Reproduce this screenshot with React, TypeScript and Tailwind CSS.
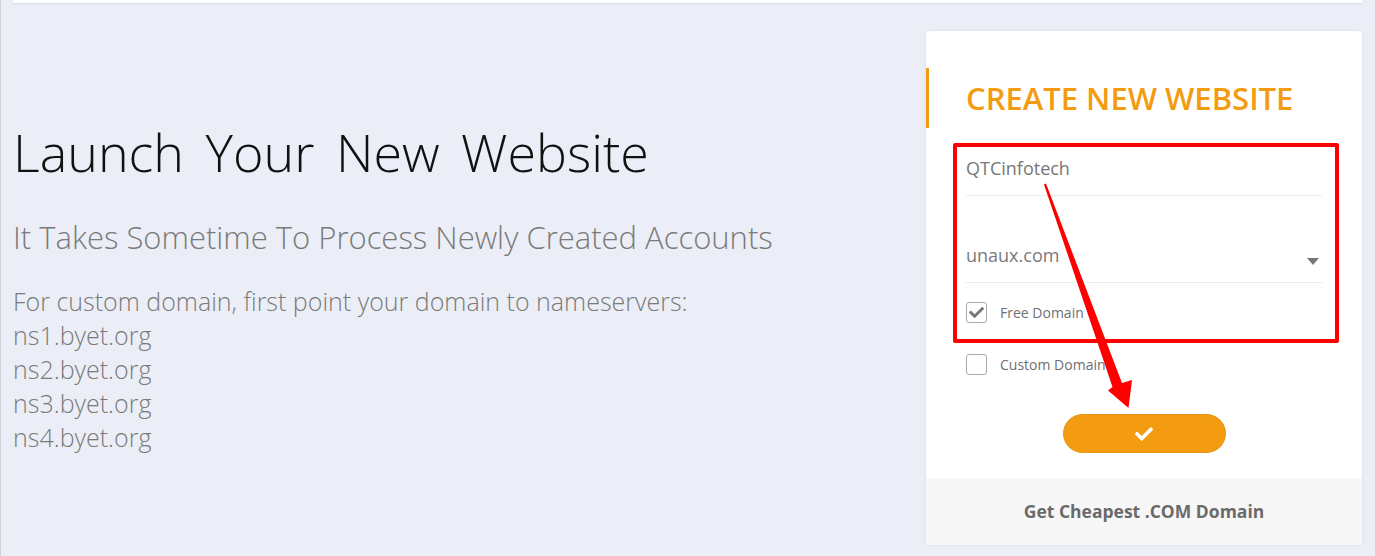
import React from "react";

const ORANGE = "#f39c12";

function FaCheck({ className }: { className?: string }) {
  return (
    <svg viewBox="0 0 512 512" className={className} fill="currentColor">
      <path d="M173.898 439.404l-166.4-166.4c-9.997-9.997-9.997-26.206 0-36.204l36.203-36.204c9.997-9.998 26.207-9.998 36.204 0L192 312.69 432.095 72.596c9.997-9.997 26.207-9.997 36.204 0l36.203 36.204c9.997 9.997 9.997 26.206 0 36.204l-294.4 294.401c-9.998 9.997-26.207 9.997-36.204-.001z" />
    </svg>
  );
}

function CheckRow({ label, checked }: { label: string; checked?: boolean }) {
  return (
    <label className="flex items-center gap-[13px]">
      <span className="flex h-[21px] w-[21px] items-center justify-center rounded-[3px] border border-[#a9a9a9] bg-white">
        {checked && <FaCheck className="h-[15px] w-[15px] text-[#777]" />}
      </span>
      <span className="text-[14px] text-[#6f6f6f]">{label}</span>
    </label>
  );
}

export default function App() {
  return (
    <div
      className="relative h-[556px] overflow-hidden border-l border-[#cfd2d8] bg-[#ebeef6]"
      style={{ fontFamily: '"Open Sans", "Noto Sans", sans-serif' }}
    >
      {/* top strip */}
      <div className="ml-[12px] mr-[13px] h-[3px] bg-white shadow-[0_1px_2px_rgba(0,0,0,0.08)]" />

      <div className="flex items-start pt-[28px] pr-[13px]">
        {/* left intro */}
        <div className="flex-1 pl-[12px]">
          <h1 className="mt-[95px] text-[52px] font-light leading-none text-[#111] [word-spacing:8px]">
            Launch Your New Website
          </h1>
          <p className="mt-[44px] text-[31px] font-light leading-none text-[#7a7a7a]">
            It Takes Sometime To Process Newly Created Accounts
          </p>
          <div className="mt-[31px] text-[25px] font-light leading-[34px] text-[#7a7a7a]">
            <p>For custom domain, first point your domain to nameservers:</p>
            <p>ns1.byet.org</p>
            <p>ns2.byet.org</p>
            <p>ns3.byet.org</p>
            <p>ns4.byet.org</p>
          </div>
        </div>

        {/* create website card */}
        <div className="w-[436px] overflow-hidden rounded-[3px] bg-white shadow-[0_0_3px_rgba(0,0,0,0.08)]">
          <div className="mt-[37px] flex h-[60px] items-center border-l-[3px] border-[#f39c12] pl-[37px]">
            <h2 className="text-[31px] font-semibold uppercase text-[#f39c12]">
              Create New Website
            </h2>
          </div>

          <form className="px-[40px]">
            <input
              defaultValue="QTCinfotech"
              className="mt-[22px] block h-[46px] w-full border-b border-[#ececec] pb-[10px] text-[18px] text-[#777] outline-none"
            />
            <div className="relative mt-[41px] flex h-[46px] items-center border-b border-[#ececec] pb-[8px]">
              <span className="text-[18px] text-[#7a7a7a]">unaux.com</span>
              <span className="absolute right-[3px] top-[21px] h-0 w-0 border-x-[6px] border-t-[7px] border-x-transparent border-t-[#777]" />
            </div>
            <div className="mt-[19px]">
              <CheckRow label="Free Domain" checked />
            </div>
            <div className="mt-[31px]">
              <CheckRow label="Custom Domain" />
            </div>
            <div className="mt-[39px] flex justify-center">
              <button
                type="button"
                className="flex h-[39px] w-[163px] items-center justify-center rounded-full border border-[#e59512] text-white"
                style={{ backgroundColor: ORANGE }}
              >
                <FaCheck className="h-[18px] w-[18px]" />
              </button>
            </div>
          </form>

          <div className="mt-[25px] flex h-[67px] items-center justify-center bg-[#f7f7f7]">
            <span className="text-[17.5px] font-bold text-[#6a6a6a]">
              Get Cheapest .COM Domain
            </span>
          </div>
        </div>
      </div>

      {/* annotation: red highlight box */}
      <div className="pointer-events-none absolute left-[952px] top-[143px] h-[200px] w-[386px] rounded-[2px] border-4 border-[#ff0000]" />

      {/* annotation: red arrow */}
      <svg
        className="pointer-events-none absolute left-0 top-0"
        width="1375"
        height="556"
        viewBox="0 0 1375 556"
      >
        <polygon
          fill="#ff0000"
          points="1043,184.5 1045,183.5 1121,383 1131,380 1127.5,408 1107,390.5 1111.5,387"
        />
      </svg>
    </div>
  );
}
